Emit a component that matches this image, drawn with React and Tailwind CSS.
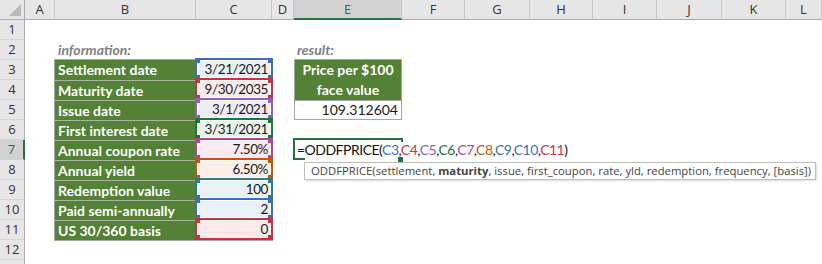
const GREEN = "#538135";

const cols = ["A", "B", "C", "D", "E", "F", "G", "H", "I", "J", "K", "L"];

const info = [
  { label: "Settlement date", value: "3/21/2021", tint: "bg-[#eaf0f9]", line: "border-[#3b6ec2]", dot: "bg-[#3b6ec2]" },
  { label: "Maturity date", value: "9/30/2035", tint: "bg-[#faeaea]", line: "border-[#c8333e]", dot: "bg-[#c8333e]" },
  { label: "Issue date", value: "3/1/2021", tint: "bg-[#f0ecf7]", line: "border-[#8a62bd]", dot: "bg-[#8a62bd]" },
  { label: "First interest date", value: "3/31/2021", tint: "bg-[#e8f3ea]", line: "border-[#18793a]", dot: "bg-[#18793a]" },
  { label: "Annual coupon rate", value: "7.50%", tint: "bg-[#f7eaf2]", line: "border-[#b2468a]", dot: "bg-[#b2468a]" },
  { label: "Annual yield", value: "6.50%", tint: "bg-[#fbeee6]", line: "border-[#c2560f]", dot: "bg-[#c2560f]" },
  { label: "Redemption value", value: "100", tint: "bg-[#eaf1f4]", line: "border-[#2f7891]", dot: "bg-[#2f7891]" },
  { label: "Paid semi-annually", value: "2", tint: "bg-[#eaf0f9]", line: "border-[#3b6ec2]", dot: "bg-[#3b6ec2]" },
  { label: "US 30/360 basis", value: "0", tint: "bg-[#faeaea]", line: "border-[#c8333e]", dot: "bg-[#c8333e]" },
];

const refs = [
  { ref: "C3", color: "text-[#3b6ec2]" },
  { ref: "C4", color: "text-[#d0343c]" },
  { ref: "C5", color: "text-[#8a62bd]" },
  { ref: "C6", color: "text-[#18793a]" },
  { ref: "C7", color: "text-[#b8438c]" },
  { ref: "C8", color: "text-[#c9560f]" },
  { ref: "C9", color: "text-[#2f7891]" },
  { ref: "C10", color: "text-[#3b6ec2]" },
  { ref: "C11", color: "text-[#d0343c]" },
];

function Handles({ dot }) {
  return (
    <>
      <span className={`absolute -left-[2px] -top-[2px] h-[5px] w-[5px] ${dot}`} />
      <span className={`absolute -right-[2px] -top-[2px] h-[5px] w-[5px] ${dot}`} />
      <span className={`absolute -bottom-[2px] -left-[2px] h-[5px] w-[5px] ${dot}`} />
      <span className={`absolute -bottom-[2px] -right-[2px] h-[5px] w-[5px] ${dot}`} />
    </>
  );
}

function InfoTable() {
  return (
    <div className="col-start-3 row-start-4 -ml-px -mt-px h-[182px] w-[219px] self-start justify-self-start border border-[#a6a6a6]">
      {info.map((r, i) => (
        <div key={r.label} className="flex h-[20px]">
          <div
            className={`flex w-[141px] items-center pl-[3px] font-bold text-white ${i > 0 ? "border-t border-[#a9b5a0]" : ""}`}
            style={{ backgroundColor: GREEN }}
          >
            {r.label}
          </div>
          <div className={`relative flex w-[76px] items-center justify-end pr-[4px] text-[13.5px] tracking-[-0.4px] text-[#1a1a1a] ${r.tint}`}>
            {r.value}
            <div className={`pointer-events-none absolute -left-px -top-[2px] h-[22px] w-[78px] border-2 shadow-[inset_0_0_0_1px_#fff] ${r.line}`}>
              <Handles dot={r.dot} />
            </div>
          </div>
        </div>
      ))}
    </div>
  );
}

export default function App() {
  return (
    <div className="h-[264px] w-[822px] overflow-hidden bg-white font-['Lato',sans-serif] text-[14px] leading-none">
      <div className="grid grid-cols-[25px_30px_141px_76px_22px_108px_63px_65px_63px_64px_65px_64px_1fr] grid-rows-[repeat(14,20px)]">
        {/* corner */}
        <div className="relative border-b border-r border-[#ababab] bg-[#e6e6e6]">
          <svg className="absolute bottom-[3px] right-[3px]" width="12" height="12" viewBox="0 0 12 12">
            <path d="M12 0 L12 12 L0 12 Z" fill="#b8b8b8" />
          </svg>
        </div>

        {/* column headers */}
        {cols.map((c) =>
          c === "E" ? (
            <div
              key={c}
              className="flex items-center justify-center border-b-2 border-r border-b-[#217346] border-r-[#c6c6c6] bg-[#d2d2d2] font-['Open_Sans',sans-serif] text-[13px] text-[#217346]"
            >
              {c}
            </div>
          ) : (
            <div
              key={c}
              className="flex items-center justify-center border-b border-r border-b-[#ababab] border-r-[#c6c6c6] bg-[#e6e6e6] font-['Open_Sans',sans-serif] text-[13px] text-[#333]"
            >
              {c}
            </div>
          )
        )}

        {/* row headers */}
        {Array.from({ length: 13 }, (_, i) => i + 1).map((n) =>
          n === 7 ? (
            <div
              key={n}
              className="col-start-1 flex items-center justify-center border-b border-r-2 border-b-[#d4d4d4] border-r-[#217346] bg-[#d2d2d2] font-['Open_Sans',sans-serif] text-[13px] text-[#217346]"
              style={{ gridRowStart: n + 1 }}
            >
              {n}
            </div>
          ) : (
            <div
              key={n}
              className="col-start-1 flex items-center justify-center border-b border-r border-b-[#d4d4d4] border-r-[#ababab] bg-[#e6e6e6] font-['Open_Sans',sans-serif] text-[13px] text-[#333]"
              style={{ gridRowStart: n + 1 }}
            >
              {n < 13 ? n : ""}
            </div>
          )
        )}

        {/* labels row 2 */}
        <div className="col-start-3 row-start-3 flex items-end pb-[3px] pl-[3px] font-bold italic text-[#7f7f7f]">
          information:
        </div>
        <div className="col-start-6 row-start-3 flex items-end pb-[3px] pl-[3px] font-bold italic text-[#7f7f7f]">
          result:
        </div>

        <InfoTable />

        {/* result block E3:E5 */}
        <div
          className="col-start-6 row-span-2 row-start-4 -mt-px flex h-[41px] flex-col items-center justify-center gap-[6px] border border-b-0 border-[#a6a6a6] font-bold text-white"
          style={{ backgroundColor: GREEN }}
        >
          <span>Price per $100</span>
          <span>face value</span>
        </div>
        <div className="col-start-6 row-start-6 flex items-center justify-end border border-[#a6a6a6] pr-[3px] text-[#1a1a1a]">
          109.312604
        </div>

        {/* active cell E7 with formula */}
        <div className="relative col-start-6 row-start-8">
          <span className="absolute -left-px -top-[2px] h-[2px] w-[110px] bg-[#217346]" />
          <span className="absolute -left-px -top-[2px] h-[22px] w-[2px] bg-[#217346]" />
          <span className="absolute -left-px bottom-0 h-[2px] w-[12px] bg-[#217346]" />
          <span className="absolute -right-px -top-[2px] h-[4px] w-[2px] bg-[#217346]" />
          <span className="absolute -bottom-[2px] -right-px h-[5px] w-[5px] bg-[#217346]" />
          <div className="absolute left-[3px] top-[3px] whitespace-nowrap tracking-[-0.5px] text-[#111]">
            =ODDFPRICE(
            {refs.map((r, i) => (
              <span key={r.ref}>
                <span className={r.color}>{r.ref}</span>
                {i < refs.length - 1 ? "," : ""}
              </span>
            ))}
            )
          </div>
          <div className="absolute left-[10px] top-[22px] z-10 flex h-[18px] w-[512px] items-center whitespace-nowrap border border-[#bdbdbd] bg-white pl-[6px] font-['Open_Sans',sans-serif] text-[11.3px] text-[#444] shadow-[1px_1px_2px_rgba(0,0,0,0.15)]">
            ODDFPRICE(settlement,&nbsp;<b>maturity</b>, issue, first_coupon, rate, yld, redemption, frequency, [basis])
          </div>
        </div>
      </div>
    </div>
  );
}
